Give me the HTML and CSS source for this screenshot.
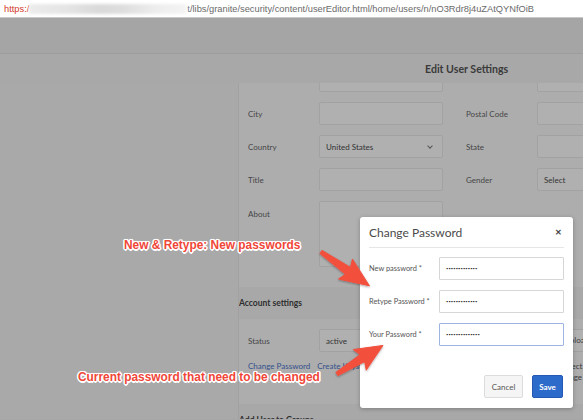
FILE: index.html
```html
<!DOCTYPE html>
<html>
<head>
<meta charset="utf-8">
<link rel="stylesheet" href="styles.css">
</head>
<body>
<div class="urlbar">
  <span class="scheme">https:/</span><span class="blurred"></span><span class="path">t/libs/granite/security/content/userEditor.html/home/users/n/nO3Rdr8j4uZAtQYNfOiB</span>
</div>
<div class="topbar"></div>
<div class="titlebar"><span class="title">Edit User Settings</span></div>
<div class="content">
  <div class="side"></div>
  <div class="main">
    <div class="panel form">
      <div class="lbl"></div><div class="inp cut"></div><div></div><div class="lbl"></div><div class="inp cut"></div>
      <div class="lbl">City</div><div class="inp"></div><div></div><div class="lbl">Postal Code</div><div class="inp"></div>
      <div class="lbl">Country</div><div class="inp sel">United States<span class="chev"></span></div><div></div><div class="lbl">State</div><div class="inp"></div>
      <div class="lbl">Title</div><div class="inp"></div><div></div><div class="lbl">Gender</div><div class="inp sel">Select</div>
      <div class="lbl top">About</div><div class="inp area"></div><div></div><div></div><div></div>
    </div>
    <div class="section">Account settings</div>
    <div class="panel account">
      <div class="acc-left">
        <div class="acc-row"><div class="lbl">Status</div><div class="inp sel">active</div></div>
        <div class="links"><span class="link">Change Password</span><span class="link">Create Keystore</span></div>
      </div>
      <div class="acc-right">
        <div class="upload">Upload Image</div>
        <div class="hint">Select a file to</div>
        <div class="hint">Image size</div>
      </div>
    </div>
    <div class="section last">Add User to Groups</div>
  </div>
</div>

<div class="modal">
  <div class="m-head"><span class="m-title">Change Password</span><span class="m-close">&#x2715;</span></div>
  <div class="m-body">
    <div class="m-row"><span class="m-lbl">New password *</span><div class="m-inp">&#8226;&#8226;&#8226;&#8226;&#8226;&#8226;&#8226;&#8226;&#8226;&#8226;&#8226;&#8226;&#8226;</div></div>
    <div class="m-row"><span class="m-lbl">Retype Password *</span><div class="m-inp">&#8226;&#8226;&#8226;&#8226;&#8226;&#8226;&#8226;&#8226;&#8226;&#8226;&#8226;&#8226;&#8226;</div></div>
    <div class="m-row"><span class="m-lbl">Your Password *</span><div class="m-inp focus">&#8226;&#8226;&#8226;&#8226;&#8226;&#8226;&#8226;&#8226;&#8226;&#8226;&#8226;&#8226;&#8226;&#8226;</div></div>
  </div>
  <div class="m-foot"><span class="btn cancel">Cancel</span><span class="btn save">Save</span></div>
</div>

<svg class="arrows" width="583" height="420" viewBox="0 0 583 420">
  <defs>
    <filter id="sh" x="-20%" y="-20%" width="140%" height="140%">
      <feDropShadow dx="0" dy="1" stdDeviation="0.8" flood-color="#000" flood-opacity="0.35"/>
    </filter>
  </defs>
  <g filter="url(#sh)" fill="#f2503e" stroke="#f2503e" stroke-width="1" stroke-linejoin="round">
    <path transform="translate(321 252) rotate(35)" d="M0,-1.8 L33,-4.2 L30,-12 L59,0 L30,12 L33,4.2 L0,1.8 Z"/>
    <path transform="translate(337 374) rotate(-32)" d="M0,-1.8 L30,-4.2 L27,-12 L54,0 L27,12 L30,4.2 L0,1.8 Z"/>
  </g>
</svg>
<div class="note n1">New &amp; Retype: New passwords</div>
<div class="note n2">Current password that need to be changed</div>
</body>
</html>
```
FILE: styles.css
```css
html, body {
  margin: 0;
  padding: 0;
}
body {
  width: 583px;
  height: 420px;
  overflow: hidden;
  position: relative;
  background: #a6a6a6;
  font-family: Lato, "Open Sans", sans-serif;
  color: #3c3c3c;
}
.urlbar {
  height: 17px;
  background: #ffffff;
  border-bottom: 1px solid #c8c8c8;
  display: flex;
  align-items: center;
  padding-left: 4px;
  font-family: "Liberation Sans", Arial, sans-serif;
  font-size: 9.3px;
  white-space: nowrap;
  overflow: hidden;
}
.scheme { color: #d33a2c; }
.blurred {
  display: inline-block;
  width: 158px;
  height: 10px;
  background: linear-gradient(90deg, #ececec 0%, #e4e4e4 25%, #d9d9d9 45%, #dedede 60%, #ededed 80%, #f4f4f4 100%);
  filter: blur(1.5px);
}
.path { color: #6a6a6a; }
.topbar {
  height: 35px;
  background: #a5a5a5;
  border-bottom: 1px solid #9d9d9d;
}
.titlebar {
  height: 29px;
  background: #a8a8a8;
  display: flex;
  align-items: center;
  padding-left: 425px;
}
.title {
  font-size: 10.6px;
  font-weight: 700;
  color: #3a3a3a;
  white-space: nowrap;
}
.content {
  display: flex;
  height: 336px;
}
.side {
  width: 238px;
  flex: none;
  background: #a9a9a9;
  border-right: 1px solid #a1a1a1;
}
.main {
  flex: 1;
  overflow: hidden;
  background: #a8a8a8;
}
.panel {
  background: #adadad;
  width: 400px;
}
.form {
  display: grid;
  grid-template-columns: 71px 124px 23px 71px 124px;
  grid-template-rows: 8px 23px 23px 23px 66px;
  row-gap: 10px;
  padding: 1px 0 20px 9px;
  align-items: center;
}
.form > .inp.cut { margin-top: -10px; height: 18px; }
.lbl {
  font-size: 8px;
  color: #464646;
}
.lbl.top { align-self: start; padding-top: 8px; }
.inp {
  height: 23px;
  box-sizing: border-box;
  background: #b0b0b0;
  border: 1px solid #a2a2a2;
  border-radius: 2px;
  font-size: 8px;
  color: #333;
  display: flex;
  align-items: center;
  padding-left: 6px;
  position: relative;
}
.inp.area { height: 66px; align-self: start; }
.chev {
  position: absolute;
  right: 10px;
  top: 8px;
  width: 3px;
  height: 3px;
  border-right: 1px solid #555;
  border-bottom: 1px solid #555;
  transform: rotate(45deg);
}
.section {
  height: 32px;
  display: flex;
  align-items: center;
  font-size: 8.5px;
  font-weight: 700;
  color: #2e2e2e;
  white-space: nowrap;
}
.section.last { align-items: flex-end; height: 21px; }
.account {
  height: 85px;
  display: flex;
  padding-left: 9px;
  box-sizing: border-box;
  padding-top: 10px;
}
.acc-left { width: 307px; flex: none; }
.acc-row { display: flex; align-items: center; }
.acc-row .lbl { width: 71px; }
.acc-row .inp { width: 124px; }
.links {
  margin-top: 9px;
  display: flex;
  gap: 7px;
  font-size: 8px;
  white-space: nowrap;
}
.link { color: #34508c; }
.acc-right {
  font-size: 8px;
  color: #3a3a3a;
  white-space: nowrap;
}
.upload {
  height: 23px;
  line-height: 21px;
  border: 1px solid #a0a0a0;
  background: #b0b0b0;
  padding: 0 4px;
  margin-bottom: 9px;
  margin-left: 4px;
  box-sizing: border-box;
}
.hint { line-height: 11px; padding-left: 6px; }

.modal {
  position: absolute;
  left: 360px;
  top: 217px;
  width: 213px;
  height: 191px;
  background: #ffffff;
  border-radius: 3px;
  box-shadow: 0 1px 4px rgba(0,0,0,0.25);
  display: flex;
  flex-direction: column;
  padding: 0 9px 10px 9px;
  box-sizing: border-box;
}
.m-head {
  height: 30px;
  border-bottom: 1px solid #e6e6e6;
  display: flex;
  align-items: center;
  justify-content: space-between;
}
.m-title {
  font-size: 12px;
  color: #4a4a4a;
}
.m-close {
  font-size: 8px;
  color: #444;
  font-weight: 700;
  margin-right: 2px;
}
.m-body {
  display: flex;
  flex-direction: column;
  gap: 10px;
  margin-top: 9px;
}
.m-row {
  display: flex;
  align-items: center;
}
.m-lbl {
  width: 70px;
  flex: none;
  font-size: 7.4px;
  color: #555;
}
.m-inp {
  width: 125px;
  height: 23px;
  box-sizing: border-box;
  border: 1px solid #d6d6d6;
  border-radius: 1px;
  display: flex;
  align-items: center;
  padding-left: 6px;
  font-size: 4px;
  letter-spacing: 0.1px;
  color: #333;
}
.m-inp.focus { border-color: #9cb4df; }
.m-foot {
  margin-top: auto;
  display: flex;
  justify-content: flex-end;
  gap: 9px;
  padding-right: 1px;
}
.btn {
  height: 23px;
  box-sizing: border-box;
  display: flex;
  align-items: center;
  justify-content: center;
  font-size: 8px;
  border-radius: 2px;
}
.cancel {
  width: 39px;
  background: #f5f5f5;
  border: 1px solid #dcdcdc;
  color: #555;
}
.save {
  width: 31px;
  background: #2d6bcb;
  border: 1px solid #2558b3;
  color: #fff;
  font-weight: 700;
}
.arrows {
  position: absolute;
  left: 0;
  top: 0;
}
.note {
  position: absolute;
  font-family: "Liberation Sans", Arial, sans-serif;
  font-weight: 700;
  font-size: 11.9px;
  color: #f04638;
  white-space: nowrap;
  text-shadow: 1.5px 0 0 #fff, -1.5px 0 0 #fff, 0 1.5px 0 #fff, 0 -1.5px 0 #fff,
    1px 1px 0 #fff, -1px 1px 0 #fff, 1px -1px 0 #fff, -1px -1px 0 #fff, 0 0 2px #fff;
}
.n1 { left: 124px; top: 238px; }
.n2 { left: 78px; top: 370px; }
```
